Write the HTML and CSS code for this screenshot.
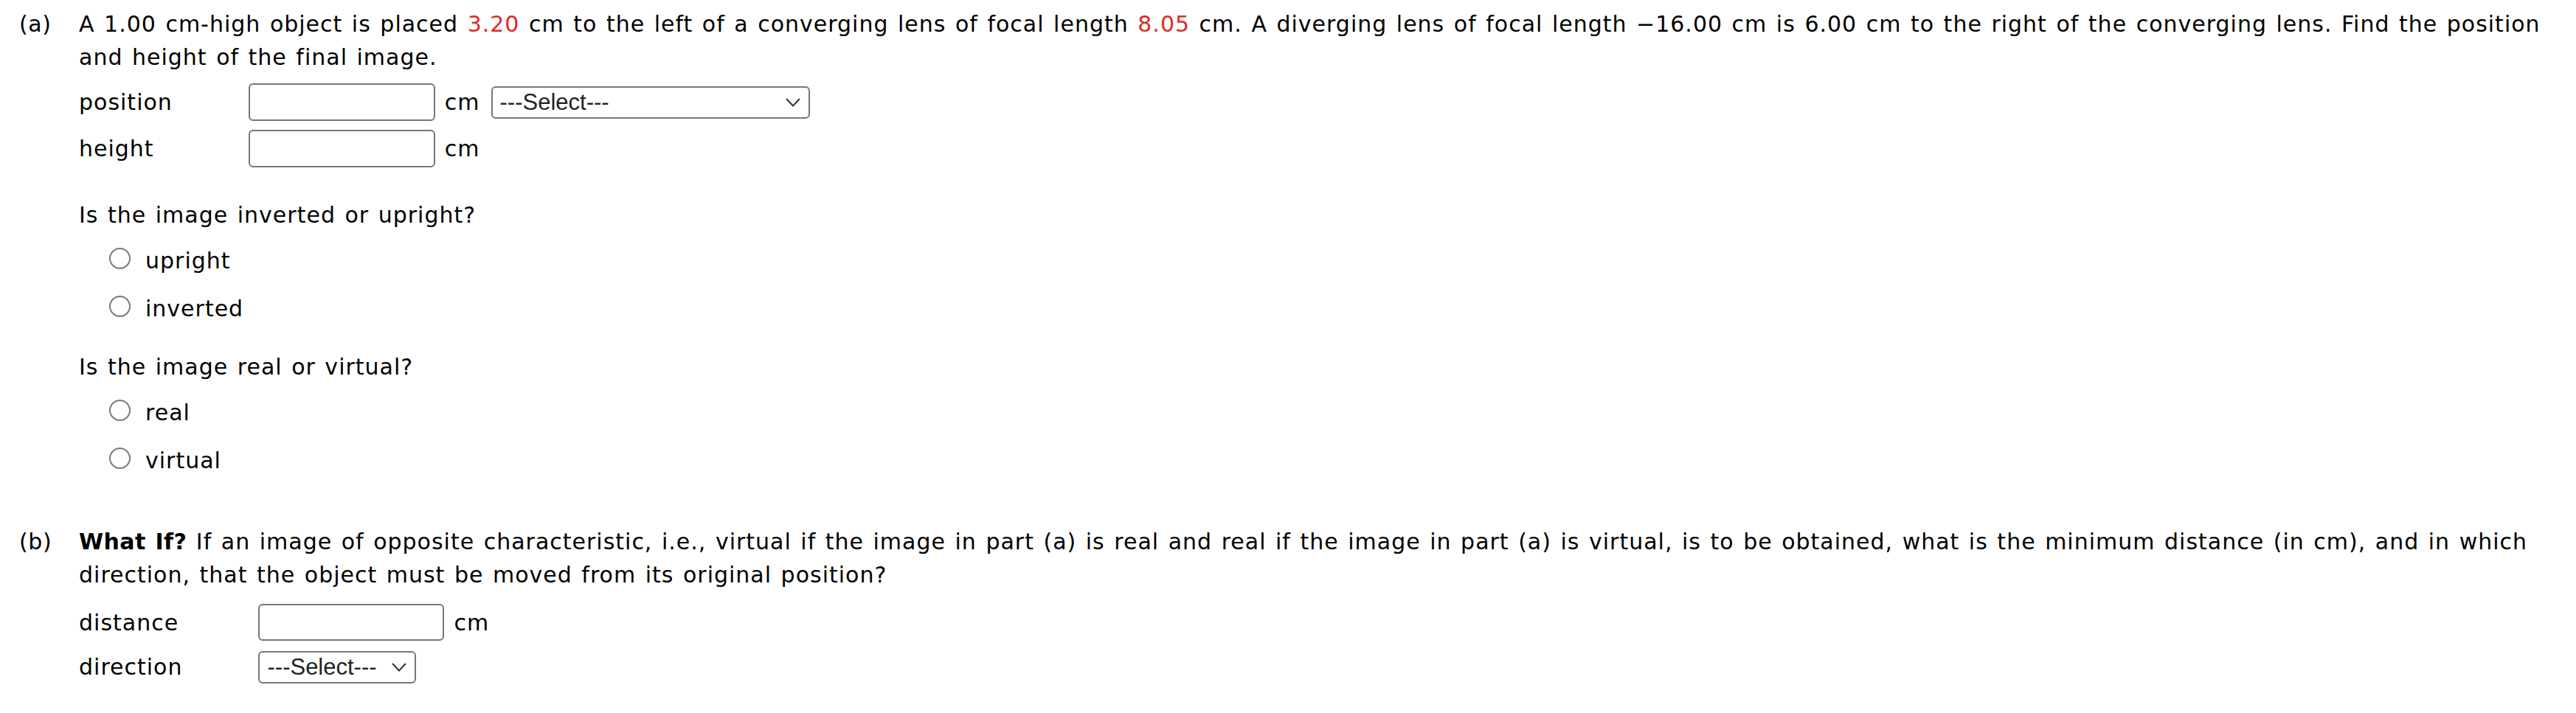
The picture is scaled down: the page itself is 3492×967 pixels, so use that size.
FILE: index.html
```html
<!DOCTYPE html>
<html lang="en">
<head>
<meta charset="utf-8">
<title>Lens problem</title>
<link rel="stylesheet" href="styles.css">
</head>
<body>
<div class="question">
  <section class="part part-a">
    <div class="part-label">(a)</div>
    <div class="part-body">
      <p class="prompt">A 1.00 cm-high object is placed <span class="num">3.20</span> cm to the left of a converging lens of focal length <span class="num">8.05</span> cm. A diverging lens of focal length &minus;16.00 cm is 6.00 cm to the right of the converging lens. Find the position and height of the final image.</p>
      <div class="answers">
        <span class="answer-label">position</span>
        <span class="answer-field">
          <input class="num-input" type="text">
          <span class="unit">cm</span>
          <span class="select-wrap select-wide">
            <select class="select"><option>---Select---</option></select>
            <svg class="chevron" viewBox="0 0 20 12" width="20" height="12"><path d="M1 1 L10 10.5 L19 1" fill="none" stroke="#333" stroke-width="2"/></svg>
          </span>
        </span>
        <span class="answer-label">height</span>
        <span class="answer-field">
          <input class="num-input" type="text">
          <span class="unit">cm</span>
        </span>
      </div>
      <p class="q q-first">Is the image inverted or upright?</p>
      <ul class="choices">
        <li><label class="choice"><input class="radio" type="radio" name="orient"><span>upright</span></label></li>
        <li><label class="choice"><input class="radio" type="radio" name="orient"><span>inverted</span></label></li>
      </ul>
      <p class="q q-second">Is the image real or virtual?</p>
      <ul class="choices">
        <li><label class="choice"><input class="radio" type="radio" name="kind"><span>real</span></label></li>
        <li><label class="choice"><input class="radio" type="radio" name="kind"><span>virtual</span></label></li>
      </ul>
    </div>
  </section>
  <section class="part part-b">
    <div class="part-label">(b)</div>
    <div class="part-body">
      <p class="prompt"><strong>What If?</strong> If an image of opposite characteristic, i.e., virtual if the image in part (a) is real and real if the image in part (a) is virtual, is to be obtained, what is the minimum distance (in cm), and in which direction, that the object must be moved from its original position?</p>
      <div class="answers answers-b">
        <span class="answer-label">distance</span>
        <span class="answer-field">
          <input class="num-input" type="text">
          <span class="unit">cm</span>
        </span>
        <span class="answer-label">direction</span>
        <span class="answer-field">
          <span class="select-wrap select-narrow">
            <select class="select"><option>---Select---</option></select>
            <svg class="chevron" viewBox="0 0 20 12" width="20" height="12"><path d="M1 1 L10 10.5 L19 1" fill="none" stroke="#333" stroke-width="2"/></svg>
          </span>
        </span>
      </div>
    </div>
  </section>
</div>
</body>
</html>
```

FILE: styles.css
```css
html, body {
  margin: 0;
  padding: 0;
  background: #ffffff;
}

body {
  font-family: "DejaVu Sans", Verdana, sans-serif;
  font-size: 30px;
  line-height: 45px;
  letter-spacing: 1px;
  word-spacing: 2px;
  color: #000000;
}

.question {
  padding: 10px 20px 0 26px;
}

.part {
  display: flex;
  align-items: flex-start;
}

.part-b {
  margin-top: 65px;
}

.part-label {
  flex: 0 0 81px;
  letter-spacing: 0.6px;
}

.part-body {
  flex: 1 1 auto;
  min-width: 0;
}

.prompt {
  margin: 0;
}

.prompt strong {
  letter-spacing: 0.4px;
}

.num {
  color: #dc2d26;
}

.answers {
  display: grid;
  grid-template-columns: max-content max-content;
  column-gap: 103px;
  row-gap: 12px;
  align-items: center;
  margin-top: 13px;
}

.answers-b {
  margin-top: 17px;
  row-gap: 13px;
}

.answer-field {
  display: flex;
  align-items: center;
}

.num-input {
  box-sizing: border-box;
  width: 253px;
  height: 51px;
  margin: 0;
  border: 2px solid #767676;
  border-radius: 6px;
  background: #fff;
  padding: 0 8px;
  font-family: "Liberation Sans", Arial, sans-serif;
  font-size: 30px;
  letter-spacing: 0;
}

.answers-b .num-input {
  width: 252px;
  height: 50px;
}

.unit {
  margin-left: 13px;
}

.select-wrap {
  position: relative;
  display: inline-block;
  margin-left: 15px;
}

.answers-b .select-wrap {
  margin-left: 0;
}

.select {
  -webkit-appearance: none;
  appearance: none;
  box-sizing: border-box;
  height: 44px;
  margin: 0;
  border: 2px solid #767676;
  border-radius: 6px;
  background: #fff;
  padding: 0 0 0 10px;
  font-family: "Liberation Sans", Arial, sans-serif;
  font-size: 31px;
  letter-spacing: 0;
  word-spacing: 0;
  color: #222;
  display: block;
}

.select-wide .select {
  width: 432px;
}

.select-narrow .select {
  width: 214px;
}

.chevron {
  position: absolute;
  right: 13px;
  top: 16px;
  pointer-events: none;
}

.q {
  margin: 0;
}

.q-first {
  margin-top: 42px;
}

.q-second {
  margin-top: 34px;
}

.choices {
  list-style: none;
  margin: 17px 0 0 0;
  padding: 0 0 0 41px;
  display: flex;
  flex-direction: column;
  gap: 20px;
}

.choice {
  display: flex;
  align-items: center;
}

.radio {
  -webkit-appearance: none;
  appearance: none;
  box-sizing: border-box;
  width: 29px;
  height: 29px;
  margin: -6px 20px 0 0;
  border: 2px solid #7a7a7a;
  border-radius: 50%;
  background: #fff;
  flex: 0 0 auto;
}
```
